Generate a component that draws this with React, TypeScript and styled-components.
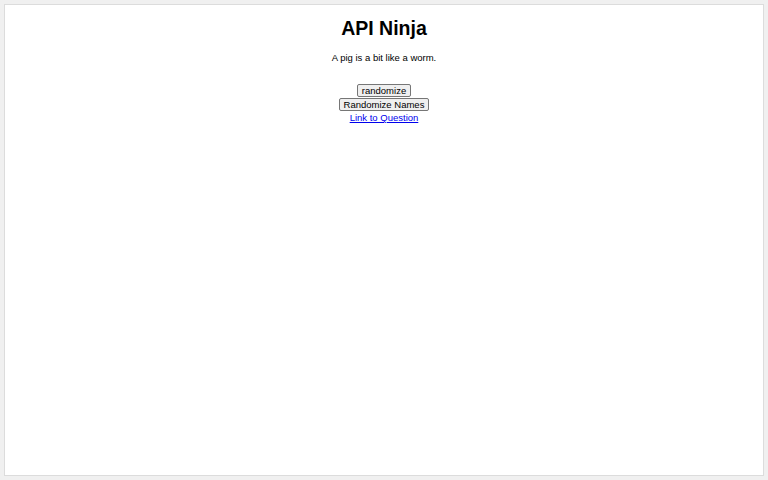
import React from "react";
import styled, { createGlobalStyle } from "styled-components";

const Global = createGlobalStyle`
  html, body { margin: 0; padding: 0; background: #f0f0f0; }
  body { font-family: "Liberation Sans", Arial, sans-serif; }
`;

const Page = styled.div`
  box-sizing: border-box;
  height: 480px;
  padding: 4px;
`;

const Panel = styled.div`
  box-sizing: border-box;
  height: 472px;
  background: #fff;
  border: 1px solid #dcdcdc;
  display: flex;
  flex-direction: column;
  align-items: center;
  padding-top: 12px;
`;

const Title = styled.h1`
  margin: 0;
  font-size: 19.5px;
  font-weight: bold;
  color: #000;
  line-height: 22px;
`;

const Sentence = styled.p`
  margin: 13px 0 0;
  font-size: 9.5px;
  line-height: 11px;
  color: #000;
`;

const Controls = styled.div`
  margin-top: 21px;
  display: flex;
  flex-direction: column;
  align-items: center;
  gap: 1px;
`;

const Button = styled.button`
  font-family: "Liberation Sans", Arial, sans-serif;
  font-size: 9.5px;
  line-height: 11px;
  padding: 0 4px;
  background: #efefef;
  border: 1px solid #767676;
  border-radius: 2px;
  color: #000;
`;

const Link = styled.a`
  font-size: 9.5px;
  line-height: 11px;
  color: #0000ee;
  text-decoration: underline;
`;

export default function App() {
  return (
    <>
      <Global />
      <Page>
        <Panel>
          <Title>API Ninja</Title>
          <Sentence>A pig is a bit like a worm.</Sentence>
          <Controls>
            <Button>randomize</Button>
            <Button>Randomize Names</Button>
            <Link href="#">Link to Question</Link>
          </Controls>
        </Panel>
      </Page>
    </>
  );
}
